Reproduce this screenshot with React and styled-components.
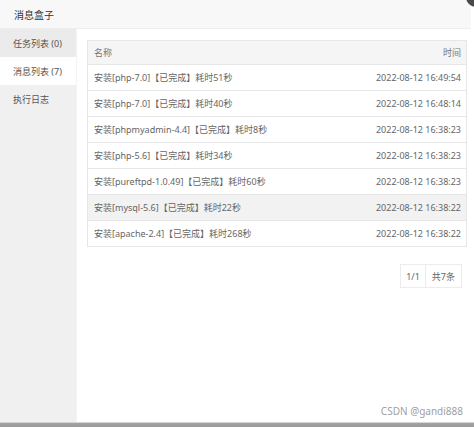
import React from 'react';
import styled, { createGlobalStyle } from 'styled-components';

const GlobalStyle = createGlobalStyle`
  html, body {
    margin: 0;
    padding: 0;
    background: #ffffff;
  }
  body {
    font-family: "Noto Sans", "Noto Sans CJK SC", sans-serif;
  }
`

const Page = styled.div`
  position: relative;
  width: 474px;
  height: 427px;
  overflow: hidden;
  display: flex;
  flex-direction: column;
  background: #ffffff;
`

const Dialog = styled.div`
  width: 471px;
  height: 422px;
  display: flex;
  flex-direction: column;
  background: #ffffff;
`

const Header = styled.div`
  height: 28px;
  flex: none;
  display: flex;
  align-items: center;
  padding-left: 14px;
  background: #f8f8f8;
  border-bottom: 1px solid #eeeeee;
  font-size: 10px;
  color: #333333;
`

const CloseDot = styled.div`
  position: absolute;
  z-index: 2;
  top: -13px;
  right: -12px;
  width: 20px;
  height: 20px;
  border-radius: 50%;
  background: #4a4a4a;
`

const Body = styled.div`
  flex: 1;
  display: flex;
  min-height: 0;
`

const Sidebar = styled.div`
  width: 76px;
  flex: none;
  background: #f0f0f0;
  border-right: 1px solid #f4f4f4;
  display: flex;
  flex-direction: column;
`

const Tab = styled.div`
  height: 28px;
  display: flex;
  align-items: center;
  padding-left: 13px;
  font-size: 9px;
  color: #555555;
  background: ${p => (p.$active ? '#ffffff' : p.$first ? '#ebebeb' : 'transparent')};
`

const Content = styled.div`
  flex: 1;
  padding: 11px 4px 0 10px;
  display: flex;
  flex-direction: column;
`

const Table = styled.div`
  border: 1px solid #e6e6e6;
  display: flex;
  flex-direction: column;
`

const Row = styled.div`
  height: ${p => (p.$head ? '23px' : '25px')};
  display: flex;
  align-items: center;
  justify-content: space-between;
  padding: 0 5px 0 6px;
  font-size: 9px;
  color: ${p => (p.$head ? '#777777' : '#666666')};
  background: ${p => (p.$head ? '#f5f5f5' : p.$hover ? '#f2f2f2' : '#ffffff')};
  border-top: ${p => (p.$head ? 'none' : '1px solid #e6e6e6')};
  white-space: nowrap;
`

const Pager = styled.div`
  margin-top: 17px;
  align-self: flex-end;
  margin-right: 5px;
  display: flex;
`

const PageItem = styled.div`
  height: 22px;
  padding: 0 ${p => p.$pad}px;
  display: flex;
  align-items: center;
  border: 1px solid #ececec;
  margin-left: -1px;
  font-size: 9px;
  color: #666666;
  background: #ffffff;
`

const Watermark = styled.div`
  position: absolute;
  right: 11px;
  bottom: 9px;
  font-size: 10px;
  color: #a0a0a0;
`

const BottomBar = styled.div`
  flex: 1;
  background: linear-gradient(#d4d4d4 0, #d4d4d4 1px, #a3a3a3 1px, #9a9a9a 100%);
`

const messages = [
  { name: '安装[php-7.0]【已完成】耗时51秒', time: '2022-08-12 16:49:54' },
  { name: '安装[php-7.0]【已完成】耗时40秒', time: '2022-08-12 16:48:14' },
  { name: '安装[phpmyadmin-4.4]【已完成】耗时8秒', time: '2022-08-12 16:38:23' },
  { name: '安装[php-5.6]【已完成】耗时34秒', time: '2022-08-12 16:38:23' },
  { name: '安装[pureftpd-1.0.49]【已完成】耗时60秒', time: '2022-08-12 16:38:23' },
  { name: '安装[mysql-5.6]【已完成】耗时22秒', time: '2022-08-12 16:38:22', hover: true },
  { name: '安装[apache-2.4]【已完成】耗时268秒', time: '2022-08-12 16:38:22' },
];

const App = () => {
  return (
    <>
      <GlobalStyle />
      <Page>
        <Dialog>
          <Header>消息盒子</Header>
          <Body>
            <Sidebar>
              <Tab $first>任务列表 (0)</Tab>
              <Tab $active>消息列表 (7)</Tab>
              <Tab>执行日志</Tab>
            </Sidebar>
            <Content>
              <Table>
                <Row $head>
                  <span>名称</span>
                  <span>时间</span>
                </Row>
                {messages.map((m, i) => (
                  <Row key={i} $hover={m.hover}>
                    <span>{m.name}</span>
                    <span>{m.time}</span>
                  </Row>
                ))}
              </Table>
              <Pager>
                <PageItem $pad={5}>1/1</PageItem>
                <PageItem $pad={6}>共7条</PageItem>
              </Pager>
            </Content>
          </Body>
        </Dialog>
        <BottomBar />
        <CloseDot />
        <Watermark>CSDN @gandi888</Watermark>
      </Page>
    </>
  );
};

export default App;
